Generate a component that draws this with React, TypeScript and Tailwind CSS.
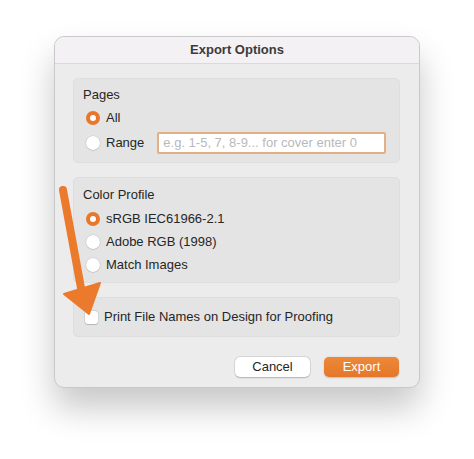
const font = { fontFamily: '"Liberation Sans", Arial, sans-serif' };

function Radio({ checked }: { checked?: boolean }) {
  return checked ? (
    <span className="flex h-[14px] w-[14px] items-center justify-center rounded-full bg-[#e8762b]">
      <span className="h-[6px] w-[6px] rounded-full bg-white" />
    </span>
  ) : (
    <span className="h-[14px] w-[14px] rounded-full bg-white shadow-[0_0_0_0.5px_rgba(0,0,0,0.12),0_0.5px_1px_rgba(0,0,0,0.15)]" />
  );
}

function Option({ label, checked }: { label: string; checked?: boolean }) {
  return (
    <div className="flex h-[23px] items-center gap-[6px] pl-[3px]">
      <Radio checked={checked} />
      <span>{label}</span>
    </div>
  );
}

export default function App() {
  return (
    <div className="h-[459px] w-[474px] bg-white pl-[54px] pt-[36px] text-[13px] text-[#262626]" style={font}>
      <div className="relative flex h-[352px] w-[366px] flex-col overflow-hidden rounded-[10px] border border-[#c9c9c9] bg-[#ececec] shadow-[0_20px_34px_rgba(0,0,0,0.22)]">
        <div className="flex h-[27px] items-center justify-center border-b border-[#dcd9dc] bg-[#f4f1f4] font-bold text-[#3b3b3b]">
          Export Options
        </div>
        <div className="flex flex-col gap-[14px] pl-[18px] pr-[19px] pt-[14px]">
          <div className="h-[85px] rounded-[5px] border border-[#dedede] bg-[#e4e4e4] px-[9px] pt-[8px]">
            <div className="h-[16px] leading-[16px]">Pages</div>
            <div className="mt-[3px]">
              <div className="flex h-[24px] items-center gap-[6px] pl-[3px]">
                <Radio checked />
                <span>All</span>
              </div>
              <div className="flex h-[26px] items-center gap-[6px] pl-[3px]">
                <Radio />
                <span>Range</span>
                <div className="ml-[7px] flex h-[22px] w-[229px] items-center rounded-[2px] border-[2px] border-[#e2b084] bg-white px-[4px] text-[#b9b9b9]">
                  e.g. 1-5, 7, 8-9... for cover enter 0
                </div>
              </div>
            </div>
          </div>
          <div className="h-[106px] rounded-[5px] border border-[#dedede] bg-[#e4e4e4] px-[9px] pt-[9px]">
            <div className="h-[16px] leading-[16px]">Color Profile</div>
            <div className="mt-[4px]">
              <Option label="sRGB IEC61966-2.1" checked />
              <Option label="Adobe RGB (1998)" />
              <Option label="Match Images" />
            </div>
          </div>
          <div className="flex h-[40px] items-center gap-[6px] rounded-[5px] border border-[#dedede] bg-[#e4e4e4] pl-[11px]">
            <span className="h-[13px] w-[13px] rounded-[3px] bg-white shadow-[0_0_0_0.5px_rgba(0,0,0,0.12),0_0.5px_1px_rgba(0,0,0,0.15)]" />
            <span>Print File Names on Design for Proofing</span>
          </div>
        </div>
        <div className="mt-[20px] flex justify-end gap-[14px] pr-[20px]">
          <button className="h-[20px] w-[75px] rounded-[5px] bg-white text-[#262626] shadow-[0_0_0_0.5px_rgba(0,0,0,0.12),0_0.5px_1.5px_rgba(0,0,0,0.2)]">
            Cancel
          </button>
          <button className="h-[20px] w-[75px] rounded-[5px] bg-gradient-to-b from-[#ee8838] to-[#e4772a] text-white shadow-[0_0.5px_1.5px_rgba(0,0,0,0.2)]">
            Export
          </button>
        </div>
      </div>
      <svg className="absolute left-0 top-0" width="474" height="459" viewBox="0 0 474 459">
        <line x1="63" y1="190" x2="81" y2="288" stroke="#ec7a2c" strokeWidth="8" strokeLinecap="round" />
        <polygon points="64,294 100,283 89,314" fill="#ec7a2c" strokeLinejoin="round" stroke="#ec7a2c" strokeWidth="2" />
      </svg>
    </div>
  );
}
